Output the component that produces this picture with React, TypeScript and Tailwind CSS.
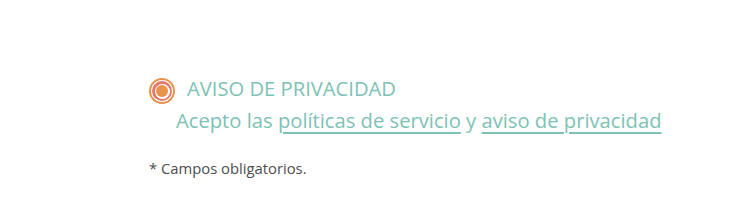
import React from "react";

export default function App() {
  return (
    <div className="w-[750px] h-[215px] bg-white" style={{ fontFamily: '"Open Sans", sans-serif' }}>
      <div className="pt-[75px] pl-[149px]">
        <div className="flex items-start">
          <div className="mt-[3px] w-[26px] h-[26px] rounded-full bg-[#e9934a] flex items-center justify-center shrink-0">
            <div className="w-[22px] h-[22px] rounded-full bg-white flex items-center justify-center">
              <div className="w-[20px] h-[20px] rounded-full bg-[#df7a70] flex items-center justify-center">
                <div className="w-[15px] h-[15px] rounded-full bg-white flex items-center justify-center">
                  <div className="w-[12px] h-[12px] rounded-full bg-[#e9934a]" />
                </div>
              </div>
            </div>
          </div>
          <span className="ml-[12px] text-[20.2px] leading-[26px] text-[#7dc2b5]">AVISO DE PRIVACIDAD</span>
        </div>
        <div className="pl-[27px] mt-[2px] text-[20.2px] leading-[28px] text-[#7dc2b5]">
          Acepto las <a className="underline underline-offset-[4px] decoration-[1.5px]">políticas de servicio</a> y{" "}
          <a className="underline underline-offset-[4px] decoration-[1.5px]">aviso de privacidad</a>
        </div>
        <div className="mt-[24px] text-[14.8px] leading-[20px] text-[#4d4d4d]">* Campos obligatorios.</div>
      </div>
    </div>
  );
}
